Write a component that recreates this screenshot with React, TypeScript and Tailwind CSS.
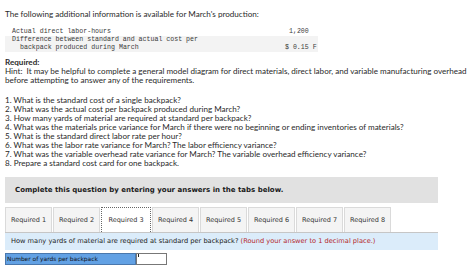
import React from "react";

const tabs = ["Required 1", "Required 2", "Required 3", "Required 4", "Required 5", "Required 6", "Required 7", "Required 8"];

const questions = [
  "What is the standard cost of a single backpack?",
  "What was the actual cost per backpack produced during March?",
  "How many yards of material are required at standard per backpack?",
  "What was the materials price variance for March if there were no beginning or ending inventories of materials?",
  "What is the standard direct labor rate per hour?",
  "What was the labor rate variance for March? The labor efficiency variance?",
  "What was the variable overhead rate variance for March? The variable overhead efficiency variance?",
  "Prepare a standard cost card for one backpack.",
];

export default function App() {
  return (
    <div className="w-[474px] h-[270px] overflow-hidden bg-white text-[#2a2a2a] font-['Lato',sans-serif] text-[8.1px] leading-[9px] pl-[5px] pt-[10px]">
      <p className="h-[9px] whitespace-nowrap">The following additional information is available for March's production:</p>
      <div className="mt-[9px] w-[313px] font-['Liberation_Mono',monospace] text-[6.6px] leading-[8px] text-[#3a3a3a]">
        <div className="flex h-[8px] pl-[7px]">
          <span className="w-[277px] whitespace-pre">Actual direct labor-hours</span>
          <span className="whitespace-pre">1,200</span>
        </div>
        <div className="bg-[#f3f3f3] pl-[7px]">
          <div className="h-[8px] whitespace-pre">Difference between standard and actual cost per</div>
          <div className="flex h-[8px]">
            <span className="w-[273px] pl-[8px] whitespace-pre">backpack produced during March</span>
            <span className="whitespace-pre">$ 0.15 F</span>
          </div>
        </div>
      </div>
      <p className="mt-[6px] h-[9px] font-bold">Required:</p>
      <p className="w-[464px]">Hint:&nbsp; It may be helpful to complete a general model diagram for direct materials, direct labor, and variable manufacturing overhead before attempting to answer any of the requirements.</p>
      <ol className="mt-[11px]">
        {questions.map((q, i) => (
          <li key={i} className="h-[9px] whitespace-nowrap">{i + 1}. {q}</li>
        ))}
      </ol>
      <div className="mt-[9px] w-[433px] h-[26px] bg-[#e1e1e1] flex items-center pl-[10px] font-['DejaVu_Sans',sans-serif] font-bold text-[7px] text-[#1a1a1a]">
        Complete this question by entering your answers in the tabs below.
      </div>
      <div className="mt-[4px] flex gap-[1px] h-[25px] font-['DejaVu_Sans',sans-serif] text-[6.5px] text-[#333]">
        {tabs.map((t, i) => (
          <div
            key={t}
            className={
              i === 2
                ? "w-[50px] flex items-center justify-center bg-white border border-dotted border-[#666] border-b-0"
                : "w-[47px] flex items-center justify-center bg-[#f4f4f4] border border-[#dadada] border-b-0"
            }
          >
            {t}
          </div>
        ))}
      </div>
      <div className="w-[433px] h-[18px] bg-[#dbecfa] border-t border-[#c6c6c6] flex items-center pl-[6px] font-['DejaVu_Sans',sans-serif] text-[6.65px] text-[#222] whitespace-nowrap">
        How many yards of material are required at standard per backpack?&nbsp;<span className="text-[#b4282c]">(Round your answer to 1 decimal place.)</span>
      </div>
      <div className="mt-[3px] flex h-[12px] font-['DejaVu_Sans',sans-serif] text-[5.9px]">
        <div className="w-[131px] bg-[#62a1e4] border border-[#4a78ad] flex items-center pl-[1px] text-[#111]">Number of yards per backpack</div>
        <div className="relative w-[31px] bg-white border border-[#777]">
          <div className="absolute left-[1px] top-0 w-[1px] h-[3px] bg-[#222]"></div>
        </div>
      </div>
    </div>
  );
}
